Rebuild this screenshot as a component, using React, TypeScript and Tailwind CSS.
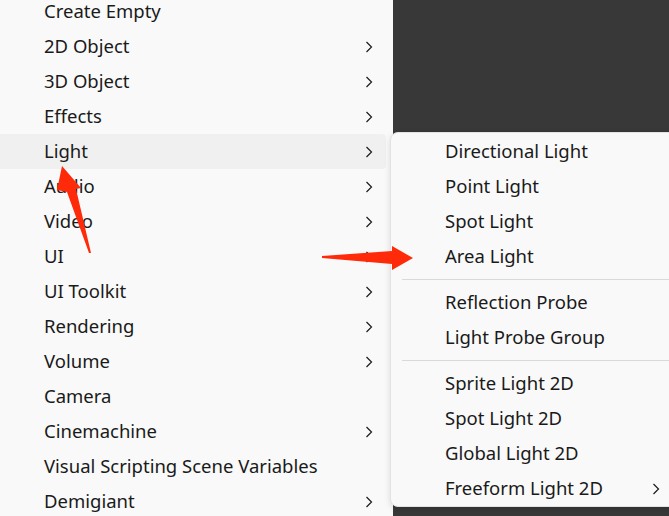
type Item = { label: string; sub?: boolean; active?: boolean };

const mainItems: Item[] = [
  { label: 'Create Empty' },
  { label: '2D Object', sub: true },
  { label: '3D Object', sub: true },
  { label: 'Effects', sub: true },
  { label: 'Light', sub: true, active: true },
  { label: 'Audio', sub: true },
  { label: 'Video', sub: true },
  { label: 'UI', sub: true },
  { label: 'UI Toolkit', sub: true },
  { label: 'Rendering', sub: true },
  { label: 'Volume', sub: true },
  { label: 'Camera' },
  { label: 'Cinemachine', sub: true },
  { label: 'Visual Scripting Scene Variables' },
  { label: 'Demigiant', sub: true },
];

const lightGroups: Item[][] = [
  [{ label: 'Directional Light' }, { label: 'Point Light' }, { label: 'Spot Light' }, { label: 'Area Light' }],
  [{ label: 'Reflection Probe' }, { label: 'Light Probe Group' }],
  [{ label: 'Sprite Light 2D' }, { label: 'Spot Light 2D' }, { label: 'Global Light 2D' }, { label: 'Freeform Light 2D', sub: true }],
];

function Chevron() {
  return (
    <svg width="8" height="12" viewBox="0 0 8 12" className="shrink-0">
      <path d="M1.5 1 L6.5 6 L1.5 11" fill="none" stroke="#1b1b1b" strokeWidth="1.2" />
    </svg>
  );
}

export default function App() {
  return (
    <div
      className="relative flex h-[516px] w-[669px] overflow-hidden bg-[#383838] text-[18.5px] text-[#1a1a1a]"
      style={{ fontFamily: '"Noto Sans", "Liberation Sans", sans-serif' }}
    >
      <div className="h-full w-[393px] shrink-0 bg-[#f9f9f9]">
        <div className="-mt-[6px]">
          {mainItems.map((item) => (
            <div
              key={item.label}
              className={
                item.active
                  ? 'mr-[7px] flex h-[35px] items-center justify-between rounded-r-[4px] bg-[#f0f0f0] pl-[44px] pr-[13px]'
                  : 'mr-[7px] flex h-[35px] items-center justify-between pl-[44px] pr-[13px]'
              }
            >
              <span className="whitespace-nowrap pb-[2px]">{item.label}</span>
              {item.sub && <Chevron />}
            </div>
          ))}
        </div>
      </div>

      {/* Light submenu */}
      <div className="absolute left-[390px] top-[132px] w-[292px] rounded-[8px] border border-[#e3e3e3] bg-[#f9f9f9] pt-px shadow-[0_2px_6px_rgba(0,0,0,0.12)]">
        {lightGroups.map((group, gi) => (
          <div key={gi}>
            {gi > 0 && (
              <div className="flex h-[11px] items-center pl-[11px]">
                <div className="h-px w-full bg-[#dadada]" />
              </div>
            )}
            {group.map((item) => (
              <div key={item.label} className="flex h-[35px] items-center justify-between pl-[54px] pr-[21px]">
                <span className="whitespace-nowrap pb-[2px]">{item.label}</span>
                {item.sub && <Chevron />}
              </div>
            ))}
          </div>
        ))}
      </div>

      {/* annotation arrows */}
      <svg className="pointer-events-none absolute left-0 top-0" width="669" height="516" viewBox="0 0 669 516">
        <polygon points="62,166 81,188 76,189 91,253 89,253 67,192 57,190" fill="#ff2a0a" />
        <polygon points="322,256 392,251 392,246 413,258 392,270 392,264 322,258" fill="#ff2a0a" />
      </svg>
    </div>
  );
}
